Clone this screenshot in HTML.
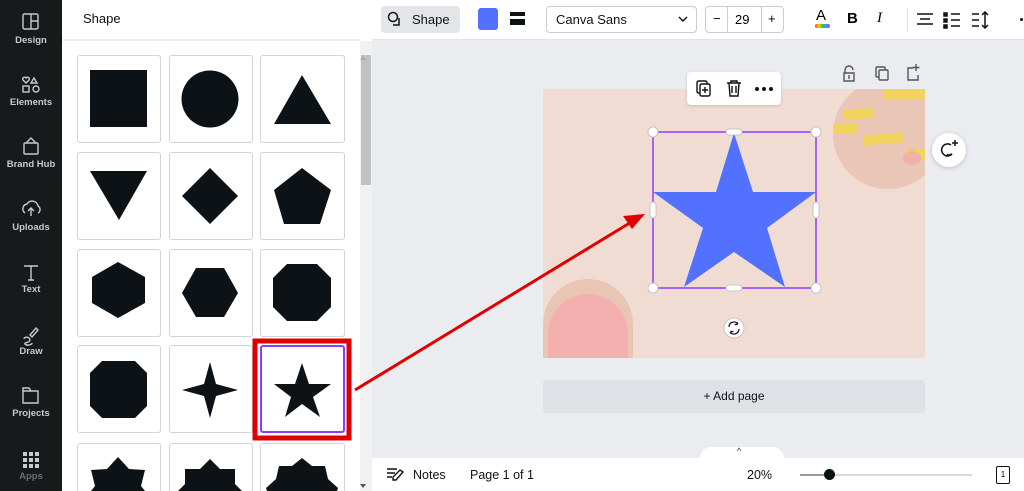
<!DOCTYPE html>
<html style="width:1024px;height:491px;overflow:hidden"><head><meta charset="utf-8"><style>
*{margin:0;padding:0;box-sizing:border-box}
body{width:1024px;height:491px;overflow:hidden;position:relative;font-family:"Liberation Sans",sans-serif;background:#ebecf0}
.a{position:absolute}
.side{left:0;top:0;width:62px;height:491px;background:#18191b}
.si{position:absolute;left:0;width:62px;text-align:center;color:#c8c9cc;font-size:9.5px;font-weight:bold}
.panel{left:62px;top:0;width:310px;height:491px;background:#fff;overflow:hidden}
.cell{position:absolute;width:84px;height:88px;border:1px solid #d2d4d8;border-radius:3px;background:#fff}
.tb{left:372px;top:0;width:652px;height:40px;background:#fff;border-bottom:1px solid #e3e4e8}
.bot{left:372px;top:458px;width:652px;height:33px;background:#fff}
</style></head><body>
<div class="a side">
 <svg class="a" style="left:0;top:0" width="62" height="491" fill="none" stroke="#c8c9cc" stroke-width="1.4">
  <rect x="23" y="14" width="15" height="15" rx="1.5"/><path d="M31 14v15M31 21h7"/>
  <path d="M23 80l3 3 3-3a1.8 1.8 0 0 0-3-2 1.8 1.8 0 0 0-3 2zM34 78l3 5h-6z"/><rect x="23" y="86" width="6" height="6"/><circle cx="36" cy="89" r="3"/>
  <rect x="24" y="143" width="14" height="11" rx="1"/><path d="M26 143l5-5 5 5"/>
  <path d="M25 213a5 5 0 0 1 2-9 6 6 0 0 1 11 2 4 4 0 0 1 0 7M31 216v-8M28 211l3-3 3 3"/>
  <path d="M24 266h14M31 266v14M28 280h6"/>
  <path d="M24 339c0-3 6-2 6 1s-6 2-5 4 7 1 7-1M30 335l6-7 2 2-6 7z"/>
  <path d="M23 391h15v12H23zM23 391v-3h6l2 3"/>
 </svg>
 <svg class="a" style="left:23px;top:452px" width="16" height="16" fill="#c8c9cc"><rect x="0" y="0" width="4" height="4"/><rect x="6" y="0" width="4" height="4"/><rect x="12" y="0" width="4" height="4"/><rect x="0" y="6" width="4" height="4"/><rect x="6" y="6" width="4" height="4"/><rect x="12" y="6" width="4" height="4"/><rect x="0" y="12" width="4" height="4"/><rect x="6" y="12" width="4" height="4"/><rect x="12" y="12" width="4" height="4"/></svg>
 <div class="si" style="top:35px">Design</div>
 <div class="si" style="top:97px">Elements</div>
 <div class="si" style="top:159px">Brand Hub</div>
 <div class="si" style="top:222px">Uploads</div>
 <div class="si" style="top:284px">Text</div>
 <div class="si" style="top:346px">Draw</div>
 <div class="si" style="top:408px">Projects</div>
 <div class="si" style="top:471px;color:#6b6c70">Apps</div>
</div>
<div class="a panel">
 <div class="a" style="left:21px;top:11px;font-size:13px;color:#0d1216">Shape</div>
 <div class="a" style="left:0;top:39px;width:298px;height:2px;background:#eef0f2"></div>
 <div class="a" style="left:298px;top:41px;width:12px;height:450px;background:#f1f1f1"></div>
 <div class="a" style="left:299px;top:55px;width:10px;height:130px;background:#c1c1c1"></div>
 <div class="cell" style="left:15px;top:55px"></div><div class="cell" style="left:107px;top:55px"></div><div class="cell" style="left:198px;top:55px;width:85px"></div>
 <div class="cell" style="left:15px;top:152px"></div><div class="cell" style="left:107px;top:152px"></div><div class="cell" style="left:198px;top:152px;width:85px"></div>
 <div class="cell" style="left:15px;top:249px"></div><div class="cell" style="left:107px;top:249px"></div><div class="cell" style="left:198px;top:249px;width:85px"></div>
 <div class="cell" style="left:15px;top:345px"></div><div class="cell" style="left:107px;top:345px"></div><div class="cell" style="left:198px;top:345px;width:85px;border:2px solid #8b3dff"></div>
 <div class="cell" style="left:15px;top:443px;height:48px;border-bottom:none;border-radius:3px 3px 0 0"></div><div class="cell" style="left:107px;top:443px;height:48px;border-bottom:none;border-radius:3px 3px 0 0"></div><div class="cell" style="left:198px;top:443px;width:85px;height:48px;border-bottom:none;border-radius:3px 3px 0 0"></div>
</div>
<svg class="a" style="left:0;top:0" width="1024" height="491">
 <g fill="#0d1216">
  <rect x="90" y="70" width="57" height="57"/>
  <circle cx="210" cy="99" r="28.5"/>
  <polygon points="274,124 302,75 331,124"/>
  <polygon points="90,171 147,171 119,220"/>
  <polygon points="210,168 238,196 210,224 182,196"/>
  <polygon points="302,168 331,190 320,224 284,224 274,190"/>
  <polygon points="118,262 145,277 145,303 118,318 92,303 92,277"/>
  <polygon points="196,268 224,268 238,293 224,317 196,317 182,293"/>
  <polygon points="287,264 317,264 331,278 331,307 317,321 287,321 273,307 273,278"/>
  <polygon points="102,361 135,361 147,373 147,406 135,418 102,418 90,406 90,373"/>
  <polygon points="210,362 216,384 238,390 216,396 210,418 204,396 182,390 204,384"/>
  <polygon points="302,363 309,384 331,384 313,397 320,417 302,404 285,417 291,397 274,384 295,384"/>
  <polygon points="118,457 129,469 145,470 141,486 145,491 91,491 95,486 91,470 107,469"/>
  <polygon points="210,459 220,469 235,469 235,484 242,491 178,491 185,484 185,469 200,469"/>
  <polygon points="302,458 312,466 325,466 328,479 338,488 337,491 267,491 266,488 276,479 279,466 292,466"/>
 </g>
 <polygon points="360,484 366,484 363,488" fill="#555"/>
 <polygon points="360,60 366,60 363,56" fill="#aaa"/>
 <rect x="255" y="341" width="94" height="97" fill="none" stroke="#e00000" stroke-width="5"/>
</svg>
<div class="a tb">
 <div class="a" style="left:9px;top:6px;width:79px;height:27px;background:#e3e5e8;border-radius:4px"></div>
 <svg class="a" style="left:15px;top:11px" width="18" height="18" fill="none" stroke="#0d1216" stroke-width="1.5"><circle cx="6" cy="6" r="4.5"/><path d="M12 7v7H6"/></svg>
 <div class="a" style="left:40px;top:12px;font-size:13px;color:#0d1216">Shape</div>
 <div class="a" style="left:106px;top:8px;width:20px;height:22px;background:#5271ff;border-radius:3px"></div>
 <div class="a" style="left:138px;top:12px;width:15px;height:4px;background:#0d1216"></div>
 <div class="a" style="left:138px;top:19px;width:15px;height:6px;background:#0d1216"></div>
 <div class="a" style="left:174px;top:6px;width:151px;height:27px;border:1px solid #c9ccd1;border-radius:4px"></div>
 <div class="a" style="left:184px;top:12px;font-size:13px;color:#0d1216">Canva Sans</div>
 <svg class="a" style="left:306px;top:15px" width="10" height="8" fill="none" stroke="#0d1216" stroke-width="1.4"><path d="M1 2l4 4 4-4"/></svg>
 <div class="a" style="left:333px;top:6px;width:79px;height:27px;border:1px solid #c9ccd1;border-radius:4px"></div>
 <div class="a" style="left:355px;top:6px;width:1px;height:27px;background:#c9ccd1"></div>
 <div class="a" style="left:389px;top:6px;width:1px;height:27px;background:#c9ccd1"></div>
 <div class="a" style="left:341px;top:11px;font-size:13px">−</div>
 <div class="a" style="left:363px;top:12px;font-size:13px">29</div>
 <div class="a" style="left:396px;top:11px;font-size:13px">+</div>
 <div class="a" style="left:444px;top:7px;font-size:15px">A</div>
 <div class="a" style="left:443px;top:24px;width:15px;height:4px;background:linear-gradient(90deg,#f33,#fc0,#3c3,#39f,#c3f);border-radius:2px"></div>
 <div class="a" style="left:475px;top:10px;font-size:15px;font-weight:bold">B</div>
 <div class="a" style="left:505px;top:10px;font-size:15px;font-style:italic;font-family:'Liberation Serif',serif">I</div>
 <div class="a" style="left:535px;top:8px;width:1px;height:24px;background:#e0e0e0"></div>
 <svg class="a" style="left:544px;top:11px" width="90" height="18" fill="none" stroke="#0d1216" stroke-width="1.5"><path d="M1 3h16M4 8h10M1 13h16"/><rect x="28" y="2" width="3" height="3" fill="#0d1216"/><rect x="28" y="8" width="3" height="3" fill="#0d1216"/><rect x="28" y="14" width="3" height="3" fill="#0d1216"/><path d="M35 3h9M35 9h9M35 15h9M56 3h7M56 9h7M56 15h7M69 2v14M66 4l3-3 3 3M66 14l3 3 3-3"/></svg>
 <div class="a" style="left:648px;top:18px;width:3px;height:3px;background:#0d1216;border-radius:50%"></div>
</div>
<div class="a" style="left:543px;top:89px;width:382px;height:269px;background:#f0dcd3;overflow:hidden">
 <div class="a" style="left:290px;top:-10px;width:110px;height:110px;background:#e9c6b6;border-radius:50%"></div>
 <div class="a" style="left:300px;top:20px;width:30px;height:10px;background:#f2d35c;transform:rotate(-5deg)"></div>
 <div class="a" style="left:320px;top:45px;width:40px;height:10px;background:#f2d35c;transform:rotate(-5deg)"></div>
 <div class="a" style="left:290px;top:35px;width:25px;height:9px;background:#f2d35c"></div>
 <div class="a" style="left:340px;top:0px;width:42px;height:10px;background:#f2d35c"></div>
 <div class="a" style="left:362px;top:60px;width:20px;height:10px;background:#f2d35c"></div>
 <div class="a" style="left:360px;top:62px;width:18px;height:14px;background:#f2b0aa;border-radius:50%"></div>
 <div class="a" style="left:0;top:190px;width:90px;height:79px;background:#e9c6b4;border-radius:45px 45px 0 0"></div>
 <div class="a" style="left:5px;top:205px;width:80px;height:64px;background:#f4b0ae;border-radius:40px 40px 0 0"></div>
</div>
<div class="a" style="left:687px;top:72px;width:94px;height:33px;background:#fff;border-radius:4px;box-shadow:0 1px 3px rgba(0,0,0,.15)"></div>
<svg class="a" style="left:0;top:0" width="1024" height="491" fill="none">
 <g stroke="#0d1216" stroke-width="1.4">
  <rect x="697" y="81" width="10" height="12" rx="1.5"/><rect x="700" y="84" width="10" height="12" rx="1.5" fill="#fff"/><path d="M705 87v6M702 90h6"/>
  <path d="M727 83h14M731 83v-2h6v2M729 83l1 13h8l1-13M732 86v7M736 86v7"/>
  <path d="M845 73v-3a4 4 0 0 1 8 0M844 73h10v8h-10zM849 79v-4" stroke="#555"/>
  <rect x="876" y="67" width="9" height="10" rx="1" stroke="#555"/><rect x="879" y="70" width="9" height="10" rx="1" fill="#ebecf0" stroke="#555"/>
  <path d="M913 68h-5v12h10v-5M916 64v7M912.5 67.5h7" stroke="#555"/>
 </g>
 <circle cx="757" cy="89" r="2" fill="#0d1216"/><circle cx="764" cy="89" r="2" fill="#0d1216"/><circle cx="771" cy="89" r="2" fill="#0d1216"/>
 <polygon points="734,133 753,192 816,192 767,228 785,287 734,252 684,287 703,228 653,192 716,192" fill="#5271ff"/>
 <rect x="653" y="132" width="163" height="156" stroke="#8b3dff" stroke-width="1.5"/>
 <g fill="#fff" stroke="#bbb" stroke-width="0.8">
  <circle cx="653" cy="132" r="5"/><circle cx="816" cy="132" r="5"/><circle cx="653" cy="288" r="5"/><circle cx="816" cy="288" r="5"/>
  <rect x="726" y="129" width="16" height="6" rx="3"/><rect x="726" y="285" width="16" height="6" rx="3"/>
  <rect x="650" y="202" width="6" height="16" rx="3"/><rect x="813" y="202" width="6" height="16" rx="3"/>
  <circle cx="734" cy="328" r="10"/>
 </g>
 <path d="M729 327a5 5 0 0 1 9-3M739 329a5 5 0 0 1-9 3M737 322v2.5h-2.5M731 334v-2.5h2.5" stroke="#0d1216" stroke-width="1.2"/>
 <circle cx="949" cy="150" r="17" fill="#fff" style="filter:drop-shadow(0 1px 2px rgba(0,0,0,.2))"/>
 <path d="M951 145a6 6 0 1 0 1 9l-5 2 1-2" stroke="#0d1216" stroke-width="1.5"/><path d="M955 140v6M952 143h6" stroke="#0d1216" stroke-width="1.5"/>
 <line x1="355" y1="390" x2="633" y2="221" stroke="#e00000" stroke-width="3"/>
 <polygon points="645,214 623,216 632,229" fill="#e00000"/>
</svg>
<div class="a" style="left:543px;top:380px;width:382px;height:33px;background:#dfe1e6;border-radius:3px;font-size:12px;color:#0d1216;text-align:center;line-height:33px">+ Add page</div>
<div class="a" style="left:372px;top:443px;width:652px;height:15px;background:#ebecf0"></div>
<div class="a" style="left:700px;top:447px;width:84px;height:11px;background:#fff;border-radius:11px 11px 0 0"></div>
<div class="a" style="left:737px;top:446px;font-size:9px;color:#333">^</div>
<div class="a bot">
 <svg class="a" style="left:14px;top:8px" width="18" height="16" fill="none" stroke="#0d1216" stroke-width="1.4"><path d="M1 3h10M1 7h8M1 11h5M14 4l3 2-7 8H7v-3z"/></svg>
 <div class="a" style="left:41px;top:10px;font-size:12.5px;color:#0d1216">Notes</div>
 <div class="a" style="left:98px;top:10px;font-size:12.5px;color:#0d1216">Page 1 of 1</div>
 <div class="a" style="left:375px;top:10px;font-size:12.5px;color:#0d1216">20%</div>
 <div class="a" style="left:428px;top:16px;width:172px;height:2px;background:#d7d9dd"></div>
 <div class="a" style="left:428px;top:16px;width:28px;height:2px;background:#999"></div>
 <div class="a" style="left:452px;top:11px;width:11px;height:11px;background:#0d1216;border-radius:50%"></div>
 <div class="a" style="left:624px;top:8px;width:14px;height:18px;border:1.5px solid #0d1216;border-radius:2px;font-size:8px;text-align:center;line-height:15px">1</div>
</div>
</body></html>
